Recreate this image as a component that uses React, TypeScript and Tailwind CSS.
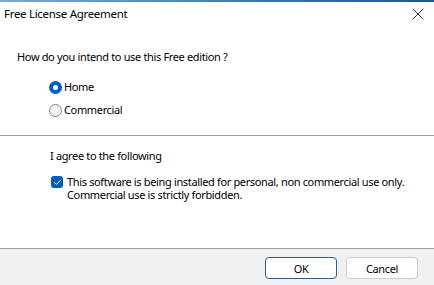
import { X, Check } from "lucide-react";

export default function App() {
  return (
    <div
      className="w-[434px] h-[285px] flex flex-col bg-white text-[11px] tracking-[-0.35px] text-black overflow-hidden"
      style={{ fontFamily: '"Noto Sans", "Segoe UI", sans-serif' }}
    >
      {/* Accent strip */}
      <div className="h-[2px] bg-gradient-to-r from-[#7fa9cf] via-[#3b82c4] to-[#1f4fa8]" />

      {/* Title bar */}
      <div className="h-[24px] flex items-center justify-between pl-[4px] pr-[6px]">
        <span className="text-[11.5px] tracking-[-0.3px] leading-[16px]">Free License Agreement</span>
        <X size={20} strokeWidth={1.1} className="text-[#222]" />
      </div>

      {/* Edition choice */}
      <div className="h-[109px] pt-[23px] pl-[17px] flex flex-col">
        <p className="leading-[16px]">How do you intend to use this Free edition ?</p>
        <div className="mt-[14px] pl-[32px] flex flex-col gap-[7px]">
          <label className="flex items-center gap-[2px] leading-[16px]">
            <span className="w-[13px] h-[13px] rounded-full bg-[#005fb8] flex items-center justify-center">
              <span className="w-[5px] h-[5px] rounded-full bg-white" />
            </span>
            <span>Home</span>
          </label>
          <label className="flex items-center gap-[2px] leading-[16px]">
            <span className="w-[13px] h-[13px] rounded-full border border-[#858585] bg-[#f3f3f3]" />
            <span>Commercial</span>
          </label>
        </div>
      </div>

      <div className="h-px bg-[#a0a0a0]" />

      {/* Agreement */}
      <div className="flex-1 pt-[12px] pl-[50px]">
        <p className="leading-[16px]">I agree to the following</p>
        <div className="mt-[11px] flex items-start gap-[4px] pl-px">
          <span className="mt-[1px] w-[12px] h-[12px] rounded-[3px] bg-[#005fb8] flex items-center justify-center shrink-0">
            <Check size={9} strokeWidth={2.5} className="text-white" />
          </span>
          <p className="leading-[13px]">
            This software is being installed for personal, non commercial use only.
            <br />
            Commercial use is strictly forbidden.
          </p>
        </div>
      </div>

      {/* Footer */}
      <div className="h-[37px] border-t border-[#a0a0a0] bg-[#f0f0f0] flex justify-end items-start pt-[8px] pr-[16px] gap-[9px]">
        <button className="w-[72px] h-[22px] rounded-[4px] bg-white border border-[#2f5f86] text-[11px] leading-none">
          OK
        </button>
        <button className="w-[72px] h-[22px] rounded-[4px] bg-white border border-[#d0d0d0] text-[11px] leading-none">
          Cancel
        </button>
      </div>
    </div>
  );
}
